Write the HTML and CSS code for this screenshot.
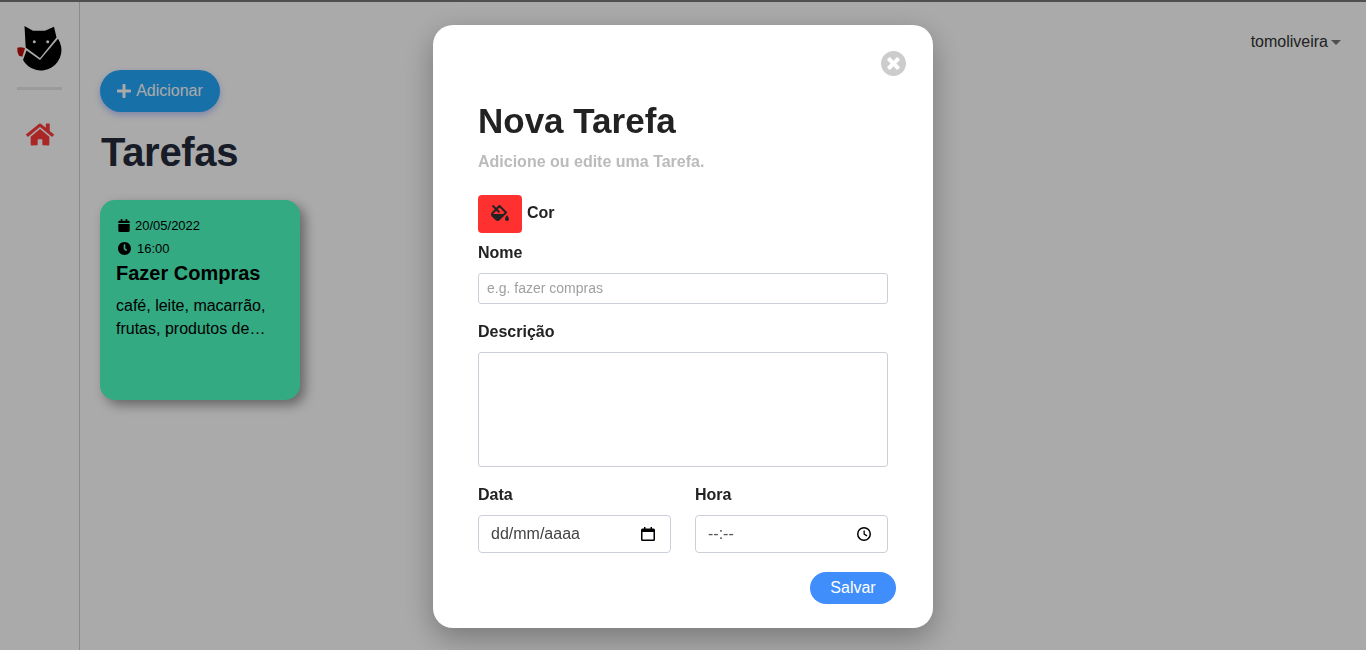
FILE: index.html
```html
<!DOCTYPE html>
<html lang="pt-BR">
<head>
    <meta charset="UTF-8">
    <meta name="viewport" content="width=device-width, initial-scale=1.0">
    <title>Tarefas</title>
    <link rel="stylesheet" href="styles.css">
</head>
<body>
    <div class="app">
        <aside class="sidebar">
            <svg class="logo" viewBox="0 0 50 50" aria-label="logo">
                <path d="M43 14.7A20.5 20.5 0 1 1 8 36L11.5 26.5L25 36Z" fill="#000"/>
                <path d="M9.5 2L18 6.7H30L39 2.7L41.5 13.5L25 34L10.7 23.5Z" fill="#000"/>
                <path d="M2.3 23.7Q6 22.5 10 24.3L7.3 32.7L4 31.7Q1.8 28 2.3 23.7Z" fill="#c00d0d"/>
                <circle cx="19.3" cy="17.7" r="1.5" fill="#fff"/>
                <circle cx="32.7" cy="17.7" r="1.5" fill="#fff"/>
            </svg>
            <div class="divider"></div>
            <a class="home-link" href="#">
                <svg viewBox="0 0 576 512"><path d="M280.37 148.26L96 300.11V464a16 16 0 0 0 16 16l112.06-.29a16 16 0 0 0 15.92-16V368a16 16 0 0 1 16-16h64a16 16 0 0 1 16 16v95.64a16 16 0 0 0 16 16.05L464 480a16 16 0 0 0 16-16V300L295.67 148.26a12.19 12.19 0 0 0-15.3 0zM571.6 251.47L488 182.56V44.05a12 12 0 0 0-12-12h-56a12 12 0 0 0-12 12v72.61L318.47 43a48 48 0 0 0-61 0L4.34 251.47a12 12 0 0 0-1.6 16.9l25.5 31A12 12 0 0 0 45.15 301l235.22-193.74a12.19 12.19 0 0 1 15.3 0L530.9 301a12 12 0 0 0 16.9-1.6l25.5-31a12 12 0 0 0-1.7-16.93z"/></svg>
            </a>
        </aside>
        <main class="content">
            <div class="user-row">
                <span class="user">tomoliveira</span>
                <span class="caret"></span>
            </div>
            <button class="add-btn">
                <svg viewBox="0 0 448 512"><path d="M416 208H272V64c0-17.67-14.33-32-32-32h-32c-17.67 0-32 14.33-32 32v144H32c-17.67 0-32 14.33-32 32v32c0 17.67 14.33 32 32 32h144v144c0 17.67 14.33 32 32 32h32c17.67 0 32-14.33 32-32V304h144c17.67 0 32-14.33 32-32v-32c0-17.67-14.33-32-32-32z"/></svg>
                Adicionar
            </button>
            <h1 class="page-title">Tarefas</h1>
            <section class="task-card">
                <div class="task-meta">
                    <svg viewBox="0 0 448 512"><path d="M12 192h424c6.6 0 12 5.4 12 12v260c0 26.5-21.5 48-48 48H48c-26.5 0-48-21.5-48-48V204c0-6.6 5.4-12 12-12zm436-44v-36c0-26.5-21.5-48-48-48h-48V12c0-6.6-5.4-12-12-12h-40c-6.6 0-12 5.4-12 12v52H160V12c0-6.6-5.4-12-12-12h-40c-6.6 0-12 5.4-12 12v52H48C21.5 64 0 85.5 0 112v36c0 6.6 5.4 12 12 12h424c6.6 0 12-5.4 12-12z"/></svg>
                    20/05/2022
                </div>
                <div class="task-meta">
                    <svg class="clock-solid" viewBox="8 8 496 496"><path d="M256,8C119,8,8,119,8,256S119,504,256,504,504,393,504,256,393,8,256,8Zm92.49,313h0l-20,25a16,16,0,0,1-22.49,2.5h0l-67-49.72a40,40,0,0,1-15-31.23V112a16,16,0,0,1,16-16h32a16,16,0,0,1,16,16V256l58,42.5A16,16,0,0,1,348.49,321Z"/></svg>
                    16:00
                </div>
                <h3 class="task-title">Fazer Compras</h3>
                <p class="task-desc">café, leite, macarrão, frutas, produtos de…</p>
            </section>
        </main>
    </div>

    <div class="overlay">
        <div class="modal">
            <button class="close-btn" aria-label="Fechar">
                <svg viewBox="8 8 496 496"><path d="M256 8C119 8 8 119 8 256s111 248 248 248 248-111 248-248S393 8 256 8zm121.6 313.1c4.7 4.7 4.7 12.3 0 17L338 377.6c-4.7 4.7-12.3 4.7-17 0L256 312l-65.1 65.6c-4.7 4.7-12.3 4.7-17 0L134.4 338c-4.7-4.7-4.7-12.3 0-17l65.6-65-65.6-65.1c-4.7-4.7-4.7-12.3 0-17l39.6-39.6c4.7-4.7 12.3-4.7 17 0l65 65.7 65.1-65.6c4.7-4.7 12.3-4.7 17 0l39.6 39.6c4.7 4.7 4.7 12.3 0 17L312 256l65.6 65.1z"/></svg>
            </button>
            <h2 class="modal-title">Nova Tarefa</h2>
            <p class="modal-subtitle">Adicione ou edite uma Tarefa.</p>

            <div class="color-row">
                <button class="color-btn" aria-label="Cor">
                    <svg viewBox="0 0 576 512"><path d="M512 320s-64 92.65-64 128c0 35.35 28.66 64 64 64s64-28.65 64-64-64-128-64-128zm-9.37-102.94L294.94 9.37C288.69 3.12 280.5 0 272.31 0s-16.38 3.12-22.62 9.37l-81.58 81.58L81.93 4.76c-6.25-6.25-16.38-6.25-22.62 0L36.69 27.38c-6.24 6.25-6.24 16.38 0 22.62l86.19 86.18-94.76 94.76c-37.49 37.48-37.49 98.26 0 135.75l117.19 117.19c18.74 18.74 43.31 28.12 67.87 28.12 24.57 0 49.13-9.37 67.87-28.12l221.57-221.57c12.5-12.5 12.5-32.75.01-45.25zm-116.22 70.97H65.93c1.36-3.84 3.57-7.98 7.43-11.83l13.15-13.15 81.61-81.61 58.6 58.6c12.49 12.49 32.75 12.49 45.24 0s12.49-32.75 0-45.24l-58.6-58.6 58.95-58.95 162.44 162.44-48.34 48.34z"/></svg>
                </button>
                <span class="color-label">Cor</span>
            </div>

            <label class="field-label first">Nome</label>
            <input class="text-input" type="text" placeholder="e.g. fazer compras">

            <label class="field-label">Descrição</label>
            <textarea class="text-area"></textarea>

            <div class="date-row">
                <div class="date-col">
                    <label class="field-label">Data</label>
                    <div class="picker">
                        <span class="picker-date">dd/mm/aaaa</span>
                        <svg class="picker-cal" viewBox="0 0 16 16"><path d="M4 1v1.5H2.5A1.5 1.5 0 0 0 1 4v9.5A1.5 1.5 0 0 0 2.5 15h11a1.5 1.5 0 0 0 1.5-1.5V4a1.5 1.5 0 0 0-1.5-1.5H12V1h-1.5v1.5h-5V1zM2.5 6h11v7.5h-11z" fill-rule="evenodd"/></svg>
                    </div>
                </div>
                <div class="date-col">
                    <label class="field-label">Hora</label>
                    <div class="picker">
                        <span class="picker-time">--:--</span>
                        <svg viewBox="0 0 16 16"><path d="M8 1a7 7 0 1 0 0 14A7 7 0 0 0 8 1zm0 1.5a5.5 5.5 0 1 1 0 11 5.5 5.5 0 0 1 0-11zM7.5 4.5v4l3.2 1.9.7-1.1-2.6-1.5V4.5z" fill-rule="evenodd"/></svg>
                    </div>
                </div>
            </div>

            <div class="modal-actions">
                <button class="save-btn">Salvar</button>
            </div>
        </div>
    </div>
</body>
</html>
```

FILE: styles.css
```css
* {
    box-sizing: border-box;
}

html, body {
    height: 100%;
}

body {
    font-family: "Liberation Sans", Arial, sans-serif;
    margin: 0;
    padding: 0;
    background-color: #fff;
    border-top: 2px solid #777;
    overflow: hidden;
}

.app {
    display: flex;
    height: 100%;
}

.sidebar {
    width: 80px;
    flex-shrink: 0;
    display: flex;
    flex-direction: column;
    align-items: center;
    padding-top: 22px;
    border-right: 1px solid #d0d0d0;
}

.logo {
    width: 50px;
    height: 50px;
    margin-left: 1px;
}

.divider {
    width: 45px;
    height: 3px;
    margin-top: 13px;
    background-color: #e8e8e8;
}

.home-link {
    display: block;
    width: 28px;
    height: 25px;
    margin-top: 32px;
    margin-left: 1px;
}

.home-link svg {
    display: block;
    width: 28px;
    height: 25px;
    fill: #ff3b3b;
}

.content {
    flex: 1;
    padding: 0 20px;
}

.user-row {
    display: flex;
    justify-content: flex-end;
    align-items: center;
    gap: 3px;
    height: 18px;
    margin-top: 31px;
    margin-right: 5px;
    font-size: 16px;
    color: #333;
}

.caret {
    width: 0;
    height: 0;
    margin-top: 1px;
    border-left: 5px solid transparent;
    border-right: 5px solid transparent;
    border-top: 5px solid #777;
}

.add-btn {
    display: flex;
    align-items: center;
    justify-content: center;
    gap: 5px;
    width: 120px;
    height: 42px;
    margin-top: 19px;
    border: none;
    border-radius: 21px;
    background-color: #24a8fc;
    color: #fff;
    font-family: inherit;
    font-size: 16px;
    box-shadow: 0 3px 6px rgba(60, 100, 255, 0.35);
}

.add-btn svg {
    width: 14px;
    height: 16px;
    fill: #fff;
}

.page-title {
    margin: 16px 0 0 1px;
    font-size: 40px;
    line-height: 48px;
    font-weight: bold;
    letter-spacing: -0.3px;
    color: #232a3a;
}

.task-card {
    width: 200px;
    height: 200px;
    margin-top: 24px;
    padding: 14px 16px;
    border-radius: 15px;
    background-color: #4dffc4;
    color: #000;
    box-shadow: 5px 5px 12px rgba(0, 0, 0, 0.4);
}

.task-meta {
    display: flex;
    align-items: center;
    gap: 5px;
    height: 23px;
    font-size: 13px;
    padding-left: 2px;
}

.task-meta svg {
    width: 12px;
    height: 13px;
    fill: #000;
}

.task-meta .clock-solid {
    width: 13px;
    margin-right: 1px;
}

.task-title {
    margin: 1px 0 0;
    font-size: 20px;
    line-height: 24px;
    font-weight: bold;
}

.task-desc {
    margin: 9px 0 0;
    font-size: 16px;
    line-height: 23px;
}

.overlay {
    position: fixed;
    top: 2px;
    left: 0;
    right: 0;
    bottom: 0;
    display: flex;
    justify-content: center;
    align-items: center;
    background-color: rgba(0, 0, 0, 0.335);
}

.overlay::before {
    content: "";
    position: fixed;
    top: 0;
    left: 0;
    right: 0;
    height: 2px;
    background-color: rgba(0, 0, 0, 0.335);
}

.modal {
    position: relative;
    width: 500px;
    padding: 75px 45px 24px;
    border-radius: 20px;
    background-color: #fff;
    color: #222;
    box-shadow: 0 10px 30px rgba(0, 0, 0, 0.3);
}

.close-btn {
    position: absolute;
    top: 26px;
    right: 27px;
    width: 25px;
    height: 25px;
    padding: 0;
    border: none;
    background: none;
}

.close-btn svg {
    display: block;
    width: 25px;
    height: 25px;
    fill: #ccc;
}

.modal-title {
    margin: 0;
    font-size: 35px;
    line-height: 42px;
    font-weight: bold;
}

.modal-subtitle {
    margin: 11px 0 0;
    font-size: 16px;
    line-height: 18px;
    font-weight: bold;
    color: #bbb;
}

.color-row {
    display: flex;
    align-items: center;
    gap: 5px;
    margin-top: 24px;
}

.color-btn {
    display: flex;
    align-items: center;
    justify-content: center;
    width: 44px;
    height: 38px;
    padding: 0;
    border: none;
    border-radius: 4px;
    background-color: #ff3030;
}

.color-btn svg {
    width: 18px;
    height: 16px;
    margin-bottom: 1px;
    fill: #222;
}

.color-label {
    margin-top: -2px;
    font-size: 16px;
    font-weight: bold;
}

.field-label {
    display: block;
    margin-top: 19px;
    margin-bottom: 11px;
    font-size: 16px;
    line-height: 18px;
    font-weight: bold;
}

.field-label.first {
    margin-top: 11px;
}

.text-input {
    display: block;
    width: 100%;
    height: 31px;
    padding: 0 8px;
    border: 1px solid #cbd0d8;
    border-radius: 3px;
    font-family: inherit;
    font-size: 14px;
}

.text-input::placeholder {
    color: #a0a0a0;
}

.text-area {
    display: block;
    width: 100%;
    height: 115px;
    border: 1px solid #cbd0d8;
    border-radius: 3px;
    resize: none;
}

.date-row {
    display: flex;
    gap: 24px;
}

.date-col {
    flex: 1;
}

.picker {
    display: flex;
    justify-content: space-between;
    align-items: center;
    height: 38px;
    padding: 0 15px 0 12px;
    border: 1px solid #cbd0d8;
    border-radius: 4px;
    font-size: 16px;
    color: #444;
}

.picker svg {
    width: 16px;
    height: 16px;
    fill: #000;
}

.picker .picker-cal {
    margin-right: -1px;
}

.picker-time {
    color: #555;
}

.modal-actions {
    display: flex;
    justify-content: flex-end;
    margin-top: 19px;
    margin-right: -8px;
}

.save-btn {
    width: 86px;
    height: 32px;
    border: none;
    border-radius: 16px;
    background-color: #3f8efc;
    color: #fff;
    font-family: inherit;
    font-size: 16px;
}
```
